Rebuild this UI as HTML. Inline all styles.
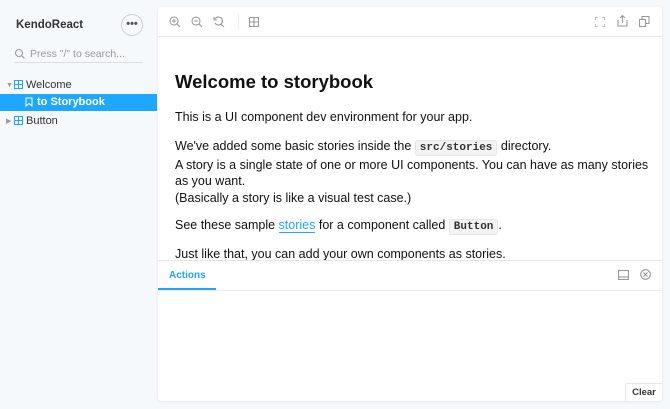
<!DOCTYPE html>
<html><head><style>
*{box-sizing:border-box;margin:0;padding:0}
body{width:670px;height:409px;background:#f6f9fc;font-family:"Liberation Sans",sans-serif;position:relative;overflow:hidden;color:#333}
.a{position:absolute}
.panel{left:158px;top:7px;width:504px;height:394px;background:#fff;border-radius:4px;box-shadow:0 1px 3px rgba(0,0,0,.08);overflow:hidden}
.ic{stroke:#999;fill:none;stroke-width:1.1}
.p{font-size:12.5px;color:#111;white-space:nowrap}
code{font-family:"Liberation Mono",monospace;font-weight:bold;font-size:11px;background:#f3f3f3;border:1px solid #e6e6e6;border-radius:3px;padding:1px 4px;color:#333}
</style></head><body>
<div class="a" style="left:16px;top:19px;font-size:11.5px;font-weight:bold;color:#333">KendoReact</div>
<div class="a" style="left:121px;top:14px;width:22px;height:22px;border:1px solid #ccc;border-radius:50%;font-size:11px;text-align:center;line-height:18px;color:#555;font-weight:bold">•••</div>
<svg class="a" style="left:14px;top:48px" width="12" height="12"><circle cx="5" cy="5" r="3.5" class="ic"/><path d="M7.5 7.5L10.5 10.5" class="ic"/></svg>
<div class="a" style="left:30px;top:48px;font-size:10.5px;color:#999">Press "/" to search...</div>
<div class="a" style="left:14px;top:62px;width:129px;height:1px;background:#ddd"></div>
<div class="a" style="left:6px;top:82px;font-size:7px;color:#999">▼</div>
<svg class="a" style="left:14px;top:80px" width="9" height="9"><rect x=".5" y=".5" width="8" height="8" fill="none" stroke="#1ea7fd"/><path d="M4.5 0v9M0 4.5h9" stroke="#1ea7fd"/></svg>
<div class="a" style="left:26px;top:79px;font-size:11px;color:#333">Welcome</div>
<div class="a" style="left:0;top:94px;width:157px;height:17px;background:#1ea7fd"></div>
<svg class="a" style="left:25px;top:97px" width="8" height="10"><path d="M1 1h6v8L4 6.5 1 9z" fill="none" stroke="#fff"/></svg>
<div class="a" style="left:37px;top:96px;font-size:11px;color:#fff;font-weight:bold">to Storybook</div>
<div class="a" style="left:6px;top:117px;font-size:7px;color:#999">▶</div>
<svg class="a" style="left:14px;top:116px" width="9" height="9"><rect x=".5" y=".5" width="8" height="8" fill="none" stroke="#1ea7fd"/><path d="M4.5 0v9M0 4.5h9" stroke="#1ea7fd"/></svg>
<div class="a" style="left:26px;top:115px;font-size:11px;color:#333">Button</div>

<div class="a panel">
 <div class="a" style="left:0;top:29px;width:504px;height:1px;background:#e6e6e6"></div>
 <svg class="a" style="left:11px;top:9px" width="12" height="12"><circle cx="5" cy="5" r="4" class="ic"/><path d="M8 8l3 3M3 5h4M5 3v4" class="ic"/></svg>
 <svg class="a" style="left:33px;top:9px" width="12" height="12"><circle cx="5" cy="5" r="4" class="ic"/><path d="M8 8l3 3M3 5h4" class="ic"/></svg>
 <svg class="a" style="left:55px;top:9px" width="12" height="12"><path d="M2 3A4 4 0 1 1 2 7" class="ic"/><path d="M8 8l3 3M1 1v3h3" class="ic"/></svg>
 <div class="a" style="left:80px;top:6px;width:1px;height:17px;background:#eee"></div>
 <svg class="a" style="left:91px;top:10px" width="10" height="10"><rect x=".5" y=".5" width="9" height="9" class="ic"/><path d="M5 0v10M0 5h10" class="ic"/></svg>
 <svg class="a" style="left:437px;top:10px" width="10" height="10"><path d="M0 3V0h3M7 0h3v3M10 7v3H7M3 10H0V7" class="ic"/></svg>
 <svg class="a" style="left:459px;top:8px" width="11" height="12"><path d="M1 5v6h9V5M5.5 8V1M3 3l2.5-2.5L8 3" class="ic"/></svg>
 <svg class="a" style="left:481px;top:9px" width="11" height="11"><rect x=".5" y="3.5" width="6" height="7" class="ic"/><path d="M3 3V.5h7v7H7" class="ic"/></svg>

 <div class="a" style="left:17px;top:64px;font-size:18.5px;font-weight:bold;color:#111">Welcome to storybook</div>
 <div class="a p" style="left:17px;top:103px">This is a UI component dev environment for your app.</div>
 <div class="a p" style="left:17px;top:131px;line-height:16.7px">We've added some basic stories inside the <code>src/stories</code> directory.<br>A story is a single state of one or more UI components. You can have as many stories<br>as you want.<br>(Basically a story is like a visual test case.)</div>
 <div class="a p" style="left:17px;top:211px">See these sample <span style="color:#1ea7fd;border-bottom:1px solid #1ea7fd">stories</span> for a component called <code>Button</code>.</div>
 <div class="a p" style="left:17px;top:240px">Just like that, you can add your own components as stories.</div>

 <div class="a" style="left:0;top:253px;width:504px;height:141px;background:#fff;border-top:1px solid #e6e6e6"></div>
 <div class="a" style="left:11px;top:263px;font-size:10px;font-weight:bold;color:#1ea7fd">Actions</div>
 <div class="a" style="left:0;top:281px;width:58px;height:2px;background:#1ea7fd"></div>
 <div class="a" style="left:0;top:283px;width:504px;height:1px;background:#eee"></div>
 <svg class="a" style="left:460px;top:263px" width="11" height="10"><rect x=".5" y=".5" width="10" height="9" class="ic"/><path d="M0 7h11" class="ic"/></svg>
 <svg class="a" style="left:482px;top:262px" width="11" height="11"><circle cx="5.5" cy="5.5" r="4.8" class="ic"/><path d="M3.5 3.5l4 4M7.5 3.5l-4 4" class="ic"/></svg>
 <div class="a" style="left:467px;top:376px;width:38px;height:20px;border:1px solid #e6e6e6;border-radius:3px 0 0 0;background:#fff;font-size:9.5px;font-weight:bold;color:#333;text-align:center;line-height:18px">Clear</div>
</div>
</body></html>
